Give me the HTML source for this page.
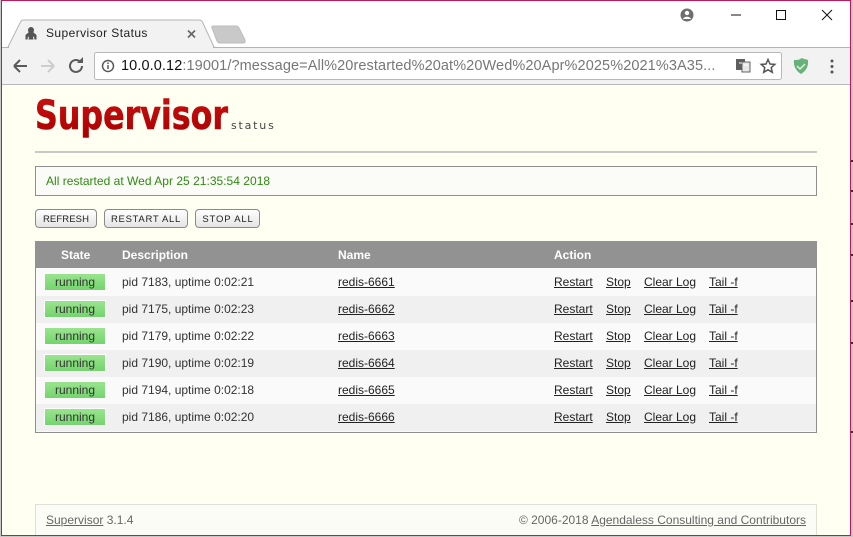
<!DOCTYPE html>
<html><head><meta charset="utf-8"><style>
html,body{margin:0;padding:0;width:853px;height:537px;overflow:hidden;background:#fff;font-family:"Liberation Sans",sans-serif}
.a{position:absolute;white-space:nowrap}
#page{position:absolute;left:2px;top:85px;width:848px;height:450px;background:#fffff2}
.row{position:absolute;left:36px;width:780px;height:27px}
.badge{position:absolute;left:45px;width:60px;height:16px;background:linear-gradient(#9ae48e,#73d56d);color:#333;font-size:12px;line-height:16px;text-align:center;box-shadow:0 0 0 1px #fff}
.t{position:absolute;font-size:12px;line-height:14px;color:#333;white-space:nowrap}
.l{text-decoration:underline;color:#222}
.btn{position:absolute;top:209px;height:17px;border:1px solid #8a8a8a;border-radius:4px;background:linear-gradient(#fff,#e4e4e4);font-size:9.500px;line-height:19px;text-align:center;color:#222}
.th{position:absolute;top:248px;font-size:12px;line-height:14px;font-weight:bold;color:#fff}
.m{position:absolute;left:851px;width:2px;height:2px;background:#333}
</style></head><body>
<div class="a" style="left:0;top:0;width:853px;height:537px;background:#c8c8c8"></div>
<div class="m" style="top:160px"></div><div class="m" style="top:190px"></div><div class="m" style="top:223px"></div><div class="m" style="top:254px"></div><div class="m" style="top:300px"></div><div class="m" style="top:342px"></div><div class="m" style="top:431px"></div>
<div class="a" style="left:1px;top:0;width:850px;height:536px;background:#fff;border:1px solid #c2185b;box-sizing:border-box"></div>
<div class="a" style="left:2px;top:47px;width:848px;height:1px;background:#b4b4b4"></div>
<div class="a" style="left:2px;top:48px;width:848px;height:36px;background:#f2f2f2"></div>
<div class="a" style="left:2px;top:84px;width:848px;height:1px;background:#b8b8b8"></div>
<svg class="a" style="left:0;top:0" width="853" height="85" viewBox="0 0 853 85">
<path d="M8 47 L21 21 Q22 20 24 20 L199 20 Q201 20 202 21 L214 47 Z" fill="#f2f2f2" stroke="#b4b4b4"/>
<path d="M9 47H213" stroke="#f2f2f2" stroke-width="2"/>
<path d="M212 28 Q211 26 214 26 L236 26 Q238 26 239 28 L245 40 Q246 43 243 43 L220 43 Q218 43 217 41 Z" fill="#c9c9c9" stroke="#bcbcbc"/>
<path d="M31 27a3 3 0 0 1 3 3c0 1-.3 1.600-.7 2.200l3.200 2.800v4.500h-2l-.5-3-1 .5.500 2.500h-5l.5-2.500-1-.5-.5 3h-2v-4.500l3.200-2.800c-.4-.6-.7-1.200-.7-2.200a3 3 0 0 1 3-3z" fill="#555"/>
<path d="M188 30.500l7 7M195 30.500l-7 7" stroke="#666" stroke-width="1.600"/>
<path d="M14 66h13M14 66l6-6M14 66l6 6" fill="none" stroke="#5a5a5a" stroke-width="2"/>
<path d="M54 66H41M54 66l-6-6M54 66l-6 6" fill="none" stroke="#cdcdcd" stroke-width="2"/>
<path d="M82 66a6 6 0 1 1-2-4.500" fill="none" stroke="#5a5a5a" stroke-width="2"/><path d="M83 57v6h-6z" fill="#5a5a5a"/>
<rect x="94.500" y="52.500" width="687" height="27" rx="2" fill="#fff" stroke="#b8b8b8"/>
<circle cx="108" cy="66" r="5.500" fill="none" stroke="#5a5a5a" stroke-width="1.500"/><path d="M108 65v4M108 62.500v1.500" stroke="#5a5a5a" stroke-width="1.500"/>
<rect x="736" y="59" width="9" height="11" fill="#5f5f5f"/><rect x="742" y="62" width="8" height="10" fill="#e8e8e8" stroke="#666"/><path d="M739 63h3M744 65h4" stroke="#fff"/>
<path d="M768 59.500l2 4.500 4.800.4-3.600 3.200 1.100 4.700-4.300-2.500-4.300 2.500 1.100-4.700-3.600-3.200 4.800-.4z" fill="none" stroke="#555" stroke-width="1.500"/>
<path d="M794 60q7 0 7-2 0 0 7 2 1 9-7 14-8-5-7-14z" fill="#67b279"/><path d="M797 66l3 3 5-5" fill="none" stroke="#dff2e2" stroke-width="1.500"/>
<circle cx="832" cy="61" r="1.500" fill="#555"/><circle cx="832" cy="66.500" r="1.500" fill="#555"/><circle cx="832" cy="72" r="1.500" fill="#555"/>
<circle cx="687" cy="15" r="6.500" fill="#6e6e6e"/><circle cx="687" cy="13" r="2.200" fill="#fff"/><path d="M683 19c1-3 7-3 8 0z" fill="#fff"/>
<path d="M731 15h10" stroke="#111"/><rect x="776.500" y="10.500" width="9" height="9" fill="none" stroke="#111"/><path d="M822 10l10 10M832 10l-10 10" stroke="#111"/>
</svg>
<div class="a" style="left:46px;top:26px;font-size:12px;line-height:15px;color:#222;letter-spacing:.42px">Supervisor Status</div>
<div class="a" style="left:121px;top:57px;font-size:14.500px;line-height:18px;color:#777;letter-spacing:.1px"><span style="color:#111">10.0.0.12</span>:19001/?message=All%20restarted%20at%20Wed%20Apr%2025%2021%3A35...</div>
<div id="page"></div>
<svg class="a" style="left:30px;top:90px" width="260" height="55" viewBox="0 0 260 55">
<defs><linearGradient id="g" x1="0" y1="0" x2="0" y2="1"><stop offset="0" stop-color="#cc1010"/><stop offset="1" stop-color="#a80000"/></linearGradient></defs>
<text x="5" y="39" font-family="DejaVu Sans" font-weight="bold" font-size="40" fill="url(#g)" stroke="#b80808" stroke-width=".6" textLength="193" lengthAdjust="spacingAndGlyphs">Supervisor</text>
<text x="201" y="39" font-family="DejaVu Sans" font-size="11" fill="#444" letter-spacing="1.800">status</text>
</svg>
<div class="a" style="left:35px;top:151px;width:782px;height:2px;background:#c8c8c4"></div>
<div class="a" style="left:35px;top:166px;width:782px;height:30px;box-sizing:border-box;border:1px solid #8f8f8f;background:#fbfbf7;color:#2e8b10;font-size:12px;line-height:28px;padding-left:10px;letter-spacing:.02px">All restarted at Wed Apr 25 21:35:54 2018</div>
<div class="btn" style="left:35px;width:60px;letter-spacing:.1px">REFRESH</div>
<div class="btn" style="left:104px;width:82px;letter-spacing:.7px">RESTART ALL</div>
<div class="btn" style="left:195px;width:63px;letter-spacing:.85px;text-indent:1px">STOP ALL</div>
<div class="a" style="left:35px;top:241px;width:782px;height:192px;box-sizing:border-box;border:1px solid #8f8f8f;background:#fafafa"></div>
<div class="a" style="left:35px;top:241px;width:782px;height:27px;background:#929292"></div>
<div class="th" style="left:61px">State</div><div class="th" style="left:122px">Description</div><div class="th" style="left:338px">Name</div><div class="th" style="left:554px">Action</div>
<div class="row" style="top:296px;background:#f0f0f0"></div>
<div class="row" style="top:350px;background:#f0f0f0"></div>
<div class="row" style="top:404px;background:#f0f0f0"></div>

<div class="badge" style="top:274px">running</div><div class="t" style="left:122px;top:275px">pid 7183, uptime 0:02:21</div><div class="t l" style="left:338px;top:275px">redis-6661</div><div class="t l" style="left:554px;top:275px">Restart</div><div class="t l" style="left:606px;top:275px">Stop</div><div class="t l" style="left:644px;top:275px">Clear Log</div><div class="t l" style="left:709px;top:275px">Tail -f</div>
<div class="badge" style="top:301px">running</div><div class="t" style="left:122px;top:302px">pid 7175, uptime 0:02:23</div><div class="t l" style="left:338px;top:302px">redis-6662</div><div class="t l" style="left:554px;top:302px">Restart</div><div class="t l" style="left:606px;top:302px">Stop</div><div class="t l" style="left:644px;top:302px">Clear Log</div><div class="t l" style="left:709px;top:302px">Tail -f</div>
<div class="badge" style="top:328px">running</div><div class="t" style="left:122px;top:329px">pid 7179, uptime 0:02:22</div><div class="t l" style="left:338px;top:329px">redis-6663</div><div class="t l" style="left:554px;top:329px">Restart</div><div class="t l" style="left:606px;top:329px">Stop</div><div class="t l" style="left:644px;top:329px">Clear Log</div><div class="t l" style="left:709px;top:329px">Tail -f</div>
<div class="badge" style="top:355px">running</div><div class="t" style="left:122px;top:356px">pid 7190, uptime 0:02:19</div><div class="t l" style="left:338px;top:356px">redis-6664</div><div class="t l" style="left:554px;top:356px">Restart</div><div class="t l" style="left:606px;top:356px">Stop</div><div class="t l" style="left:644px;top:356px">Clear Log</div><div class="t l" style="left:709px;top:356px">Tail -f</div>
<div class="badge" style="top:382px">running</div><div class="t" style="left:122px;top:383px">pid 7194, uptime 0:02:18</div><div class="t l" style="left:338px;top:383px">redis-6665</div><div class="t l" style="left:554px;top:383px">Restart</div><div class="t l" style="left:606px;top:383px">Stop</div><div class="t l" style="left:644px;top:383px">Clear Log</div><div class="t l" style="left:709px;top:383px">Tail -f</div>
<div class="badge" style="top:409px">running</div><div class="t" style="left:122px;top:410px">pid 7186, uptime 0:02:20</div><div class="t l" style="left:338px;top:410px">redis-6666</div><div class="t l" style="left:554px;top:410px">Restart</div><div class="t l" style="left:606px;top:410px">Stop</div><div class="t l" style="left:644px;top:410px">Clear Log</div><div class="t l" style="left:709px;top:410px">Tail -f</div>

<div class="a" style="left:35px;top:504px;width:782px;height:31px;box-sizing:border-box;border:1px solid #e0e0d8;border-bottom:0;background:#fcfcf7"></div>
<div class="t" style="left:46px;top:513px;color:#666"><span style="text-decoration:underline">Supervisor</span> 3.1.4</div>
<div class="t" style="right:47px;top:513px;color:#666">© 2006-2018 <span style="text-decoration:underline">Agendaless Consulting and Contributors</span></div>
</body></html>
